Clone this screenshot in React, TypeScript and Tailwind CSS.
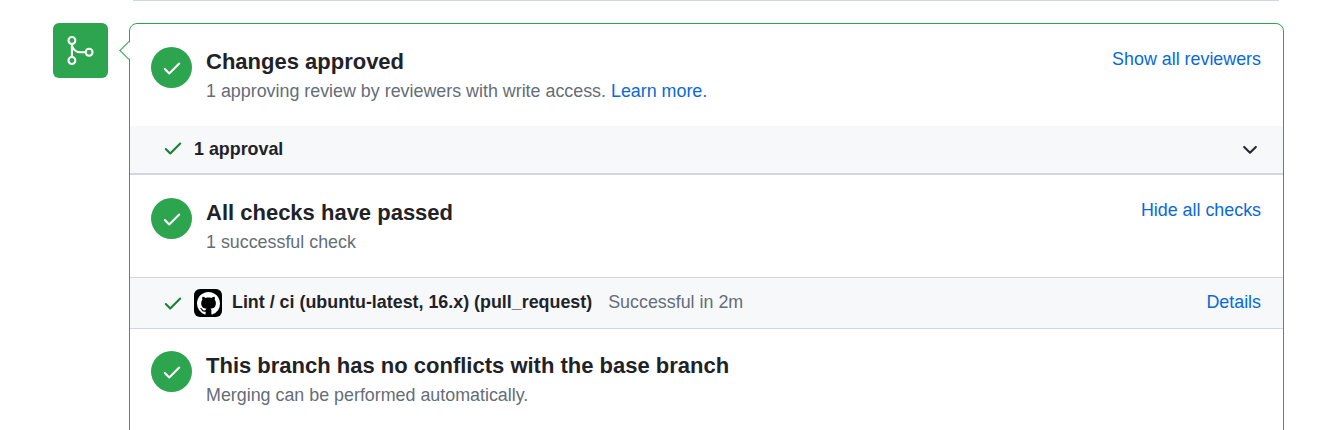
import React from 'react';

const CHECK = 'M13.78 4.22a.75.75 0 0 1 0 1.06l-7.25 7.25a.75.75 0 0 1-1.06 0L2.22 9.28a.751.751 0 0 1 .018-1.042.751.751 0 0 1 1.042-.018L6 10.94l6.72-6.72a.75.75 0 0 1 1.06 0Z';
const GITHUB = 'M8 0c4.42 0 8 3.58 8 8a8.013 8.013 0 0 1-5.45 7.59c-.4.08-.55-.17-.55-.38 0-.27.01-1.13.01-2.2 0-.75-.25-1.23-.54-1.48 1.78-.2 3.65-.88 3.65-3.95 0-.88-.31-1.59-.82-2.15.08-.2.36-1.02-.08-2.12 0 0-.67-.22-2.2.82-.64-.18-1.32-.27-2-.27-.68 0-1.36.09-2 .27-1.53-1.03-2.2-.82-2.2-.82-.44 1.1-.16 1.92-.08 2.12-.51.56-.82 1.28-.82 2.15 0 3.06 1.86 3.75 3.64 3.95-.23.2-.44.55-.51 1.07-.46.21-1.61.55-2.33-.66-.15-.24-.6-.83-1.23-.82-.67.01-.27.38.01.53.34.19.73.9.82 1.13.16.45.68 1.31 2.69.94 0 .67.01 1.3.01 1.49 0 .21-.15.45-.55.38A7.995 7.995 0 0 1 0 8c0-4.42 3.58-8 8-8Z';

const Octicon = ({ d, size, className = '' }: { d: string; size: number; className?: string }) => (
  <svg width={size} height={size} viewBox="0 0 16 16" fill="currentColor" className={className}>
    <path d={d} />
  </svg>
);

const GitMergeIcon = () => (
  <svg width="33" height="33" viewBox="0 0 24 24" fill="currentColor">
    <path d="M15 13.25a3.25 3.25 0 1 1 6.5 0 3.25 3.25 0 0 1-6.5 0Zm-12.5 6a3.25 3.25 0 1 1 6.5 0 3.25 3.25 0 0 1-6.5 0Zm0-14.5a3.25 3.25 0 1 1 6.5 0 3.25 3.25 0 0 1-6.5 0ZM5.75 6.5a1.75 1.75 0 1 0-.001-3.501A1.75 1.75 0 0 0 5.75 6.5Zm0 14.5a1.75 1.75 0 1 0-.001-3.501A1.75 1.75 0 0 0 5.75 21Zm12.5-6a1.75 1.75 0 1 0-.001-3.501A1.75 1.75 0 0 0 18.25 15Z" />
    <path d="M6.5 7.25c0 2.9 2.35 5.25 5.25 5.25h4.5V14h-4.5A6.75 6.75 0 0 1 5 7.25Z" />
    <path d="M5.75 16.75A.75.75 0 0 1 5 16V8a.75.75 0 0 1 1.5 0v8a.75.75 0 0 1-.75.75Z" />
  </svg>
);

const Section = ({
  title,
  children,
  action,
  className = 'pt-[23px]',
}: {
  title: string;
  children: React.ReactNode;
  action?: string;
  className?: string;
}) => (
  <div className={`flex h-[102px] pl-[21px] pr-[22px] ${className}`}>
    <div className="flex h-[41px] w-[41px] shrink-0 items-center justify-center rounded-full bg-[#2da44e] text-white">
      <Octicon d={CHECK} size={22} />
    </div>
    <div className="ml-[14px] flex-1">
      <h3 className="text-[22px] leading-[30px] font-bold text-[#1f2328]">{title}</h3>
      <p className="text-[17.875px] leading-[25px] mt-[2px] text-[#656d76]">{children}</p>
    </div>
    {action && <a className="text-[17.875px] leading-[25px] text-[#0969da]">{action}</a>}
  </div>
);

export default function App() {
  return (
    <div className="h-[430px] overflow-hidden bg-white font-['Liberation_Sans',Arial,sans-serif]">
      <div className="ml-[133px] w-[1146px] h-[2px] mt-[-1px] bg-[#d0d7de]" />
      <div className="flex pl-[53px] pt-[22px]">
        <div className="flex h-[55px] w-[55px] shrink-0 items-center justify-center rounded-[6px] bg-[#2da44e] text-white">
          <GitMergeIcon />
        </div>
        <div className="relative ml-[21px] w-[1155px] h-[500px] rounded-t-[8px] border border-[#2da44e] bg-white">
          <div className="absolute left-[-8px] top-[20px] h-[13px] w-[13px] rotate-45 border-b border-l border-[#2da44e] bg-white" />
          <Section title="Changes approved" action="Show all reviewers">
            1 approving review by reviewers with write access. <a className="text-[#0969da]">Learn more.</a>
          </Section>
          <div className="flex h-[49px] items-center justify-between border-b-2 border-[#d0d7de] bg-[#f6f8fa] pl-[32px] pr-[22px]">
            <div className="flex items-center">
              <Octicon d={CHECK} size={22} className="text-[#1a7f37] mt-[-3px]" />
              <span className="ml-[10px] text-[17.875px] font-bold text-[#1f2328]">1 approval</span>
            </div>
            <svg width="22" height="22" viewBox="0 0 16 16" fill="#24292f">
              <path d="M12.78 5.22a.749.749 0 0 1 0 1.06l-4.25 4.25a.749.749 0 0 1-1.06 0L3.22 6.28a.749.749 0 1 1 1.06-1.06L8 8.939l3.72-3.719a.749.749 0 0 1 1.06 0Z" />
            </svg>
          </div>
          <Section title="All checks have passed" action="Hide all checks">
            1 successful check
          </Section>
          <div className="flex h-[52px] items-center border-y border-[#d0d7de] bg-[#f6f8fa] pl-[32px] pr-[22px]">
            <Octicon d={CHECK} size={22} className="text-[#1a7f37]" />
            <div className="ml-[10px] flex h-[28px] w-[28px] items-center justify-center rounded-[6px] bg-black text-white">
              <Octicon d={GITHUB} size={23} />
            </div>
            <span className="ml-[10px] text-[17.875px] font-bold text-[#1f2328] mt-[-2px]">Lint / ci (ubuntu-latest, 16.x) (pull_request)</span>
            <span className="ml-[16px] text-[17.875px] text-[#656d76] mt-[-2px]">Successful in 2m</span>
            <a className="ml-auto text-[17.875px] text-[#0969da] mt-[-2px]">Details</a>
          </div>
          <Section title="This branch has no conflicts with the base branch" className="pt-[22px]">
            Merging can be performed automatically.
          </Section>
        </div>
      </div>
    </div>
  );
}
